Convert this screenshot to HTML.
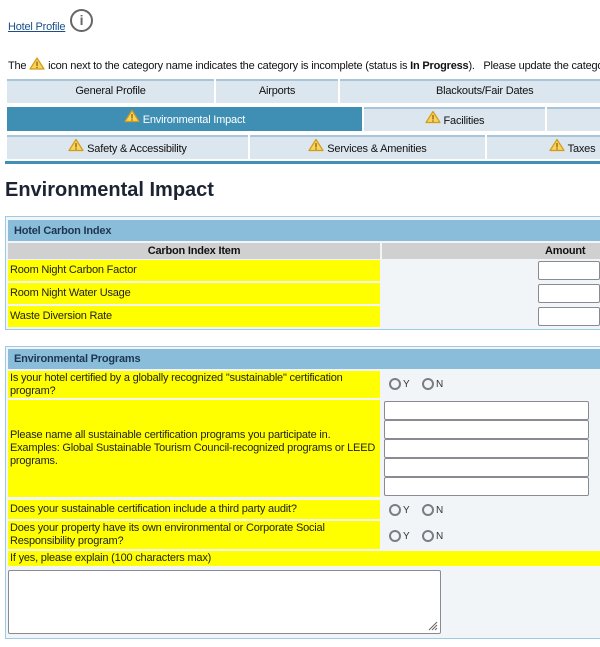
<!DOCTYPE html>
<html style="overflow:hidden"><head><meta charset="utf-8"><style>
*{margin:0;padding:0;box-sizing:border-box}
html,body{width:600px;height:647px;overflow:hidden}
body{background:#fff;font-family:"Liberation Sans",Arial,sans-serif;font-size:11px;letter-spacing:-0.2px;color:#000;position:relative}
.a{position:absolute}
.tab{position:absolute;background:#dbe6ee;border-top:2px solid #a9c5d9;text-align:center;font-size:11px;color:#111;white-space:nowrap;overflow:hidden}
.act{background:#3f8fb5;color:#fff;border-top:none}
.y{position:absolute;background:#ffff00;font-size:11px;color:#222;padding-left:2px;line-height:13px;display:flex;align-items:center}
.inp{position:absolute;background:#fff;border:1px solid #8a8a92;border-radius:2px}
.rad{position:absolute;font-size:10px;color:#333;display:flex;align-items:center}
.rad i{display:inline-block;width:12px;height:12px;border:2px solid #7c7c84;border-radius:50%;margin-right:2px}
.hd{position:absolute;background:#89bdd9;font-weight:bold;color:#1e3550;font-size:11px;padding-left:6px;display:flex;align-items:center}
.w{display:inline-block;vertical-align:middle}
</style></head><body>
<a class="a" style="left:8px;top:21px;color:#1a4f8b;text-decoration:underline;font-size:11px">Hotel Profile</a>
<div class="a" style="left:70px;top:9px;width:23px;height:23px;border:2px solid #666;border-radius:50%;text-align:center;font:bold 14px/19px 'Liberation Sans';color:#666">i</div>
<div class="a" style="left:8px;top:60px;white-space:nowrap;font-size:11px;color:#111">The <svg class="w" width="16" height="13" viewBox="0 0 16 13" style="margin-top:-6px"><path d="M8 1 L15 12 L1 12 Z" fill="#f6d55a" stroke="#d39a1c" stroke-width="1.2" stroke-linejoin="round"/><rect x="7.3" y="4.5" width="1.4" height="4.5" fill="#9a6a10"/><rect x="7.3" y="9.8" width="1.4" height="1.3" fill="#9a6a10"/></svg> icon next to the category name indicates the category is incomplete (status is <b>In Progress</b>). &nbsp; Please update the category</div>

<div class="tab" style="left:7px;top:79px;width:207px;height:24px;line-height:21px">General Profile</div>
<div class="tab" style="left:216px;top:79px;width:122px;height:24px;line-height:21px">Airports</div>
<div class="tab" style="left:340px;top:79px;width:260px;height:24px;line-height:21px;text-align:left;padding-left:96px">Blackouts/Fair Dates</div>

<div class="tab act" style="left:7px;top:107px;width:355px;height:24px;line-height:26px"><svg class="w" width="16" height="14" viewBox="0 0 16 13" style="margin-top:-8px"><path d="M8 1 L15 12 L1 12 Z" fill="#f6d55a" stroke="#d39a1c" stroke-width="1.2" stroke-linejoin="round"/><rect x="7.3" y="4.5" width="1.4" height="4.5" fill="#9a6a10"/><rect x="7.3" y="9.8" width="1.4" height="1.3" fill="#9a6a10"/></svg> Environmental Impact</div>
<div class="tab" style="left:364px;top:107px;width:181px;height:24px;line-height:24px"><svg class="w" width="16" height="14" viewBox="0 0 16 13" style="margin-top:-8px"><path d="M8 1 L15 12 L1 12 Z" fill="#f6d55a" stroke="#d39a1c" stroke-width="1.2" stroke-linejoin="round"/><rect x="7.3" y="4.5" width="1.4" height="4.5" fill="#9a6a10"/><rect x="7.3" y="9.8" width="1.4" height="1.3" fill="#9a6a10"/></svg> Facilities</div>
<div class="tab" style="left:547px;top:107px;width:53px;height:24px"></div>

<div class="tab" style="left:7px;top:135px;width:241px;height:24px;line-height:24px"><svg class="w" width="16" height="14" viewBox="0 0 16 13" style="margin-top:-8px"><path d="M8 1 L15 12 L1 12 Z" fill="#f6d55a" stroke="#d39a1c" stroke-width="1.2" stroke-linejoin="round"/><rect x="7.3" y="4.5" width="1.4" height="4.5" fill="#9a6a10"/><rect x="7.3" y="9.8" width="1.4" height="1.3" fill="#9a6a10"/></svg> Safety &amp; Accessibility</div>
<div class="tab" style="left:250px;top:135px;width:235px;height:24px;line-height:24px"><svg class="w" width="16" height="14" viewBox="0 0 16 13" style="margin-top:-8px"><path d="M8 1 L15 12 L1 12 Z" fill="#f6d55a" stroke="#d39a1c" stroke-width="1.2" stroke-linejoin="round"/><rect x="7.3" y="4.5" width="1.4" height="4.5" fill="#9a6a10"/><rect x="7.3" y="9.8" width="1.4" height="1.3" fill="#9a6a10"/></svg> Services &amp; Amenities</div>
<div class="tab" style="left:487px;top:135px;width:113px;height:24px;line-height:24px;text-align:left;padding-left:62px"><svg class="w" width="16" height="14" viewBox="0 0 16 13" style="margin-top:-8px"><path d="M8 1 L15 12 L1 12 Z" fill="#f6d55a" stroke="#d39a1c" stroke-width="1.2" stroke-linejoin="round"/><rect x="7.3" y="4.5" width="1.4" height="4.5" fill="#9a6a10"/><rect x="7.3" y="9.8" width="1.4" height="1.3" fill="#9a6a10"/></svg> Taxes</div>
<div class="a" style="left:5px;top:161px;width:595px;height:3px;background:#428fb6"></div>

<div class="a" style="left:5px;top:179px;font-size:20px;font-weight:bold;color:#1c2333;letter-spacing:0">Environmental Impact</div>

<div class="a" style="left:5px;top:216px;width:600px;height:114px;border:1px solid #9ccbe3;background:#f2f5f8"></div>
<div class="hd" style="left:8px;top:220px;width:592px;height:21px">Hotel Carbon Index</div>
<div class="a" style="left:8px;top:243px;width:372px;height:16px;background:#d0d0d0;font-weight:bold;text-align:center;line-height:16px;color:#111">Carbon Index Item</div>
<div class="a" style="left:382px;top:243px;width:218px;height:16px;background:#d0d0d0;font-weight:bold;line-height:16px;padding-left:163px;color:#111">Amount</div>
<div class="y" style="left:8px;top:260px;width:372px;height:21px">Room Night Carbon Factor</div>
<div class="y" style="left:8px;top:283px;width:372px;height:21px">Room Night Water Usage</div>
<div class="y" style="left:8px;top:306px;width:372px;height:21px">Waste Diversion Rate</div>
<div class="inp" style="left:538px;top:261px;width:62px;height:19px"></div>
<div class="inp" style="left:538px;top:284px;width:62px;height:19px"></div>
<div class="inp" style="left:538px;top:307px;width:62px;height:19px"></div>

<div class="a" style="left:5px;top:346px;width:600px;height:293px;border:1px solid #9ccbe3;background:#f2f5f8"></div>
<div class="hd" style="left:8px;top:349px;width:592px;height:20px">Environmental Programs</div>
<div class="y" style="left:8px;top:371px;width:372px;height:27px">Is your hotel certified by a globally recognized "sustainable" certification program?</div>
<div class="rad" style="left:389px;top:378px"><i></i>Y</div><div class="rad" style="left:422px;top:378px"><i></i>N</div>
<div class="y" style="left:8px;top:400px;width:372px;height:97px">Please name all sustainable certification programs you participate in. Examples: Global Sustainable Tourism Council-recognized programs or LEED programs.</div>
<div class="inp" style="left:384px;top:401px;width:205px;height:19px"></div>
<div class="inp" style="left:384px;top:420px;width:205px;height:19px"></div>
<div class="inp" style="left:384px;top:439px;width:205px;height:19px"></div>
<div class="inp" style="left:384px;top:458px;width:205px;height:19px"></div>
<div class="inp" style="left:384px;top:477px;width:205px;height:19px"></div>
<div class="y" style="left:8px;top:500px;width:372px;height:19px">Does your sustainable certification include a third party audit?</div>
<div class="rad" style="left:389px;top:504px"><i></i>Y</div><div class="rad" style="left:422px;top:504px"><i></i>N</div>
<div class="y" style="left:8px;top:521px;width:372px;height:28px">Does your property have its own environmental or Corporate Social Responsibility program?</div>
<div class="rad" style="left:389px;top:530px"><i></i>Y</div><div class="rad" style="left:422px;top:530px"><i></i>N</div>
<div class="y" style="left:8px;top:551px;width:592px;height:15px">If yes, please explain (100 characters max)</div>
<div class="inp" style="left:8px;top:570px;width:433px;height:64px"><svg class="a" style="right:2px;bottom:2px" width="11" height="11"><path d="M10 2 L2 10 M10 5 L5 10 M10 8 L8 10" stroke="#666" stroke-width="1"/></svg></div>
</body></html>
